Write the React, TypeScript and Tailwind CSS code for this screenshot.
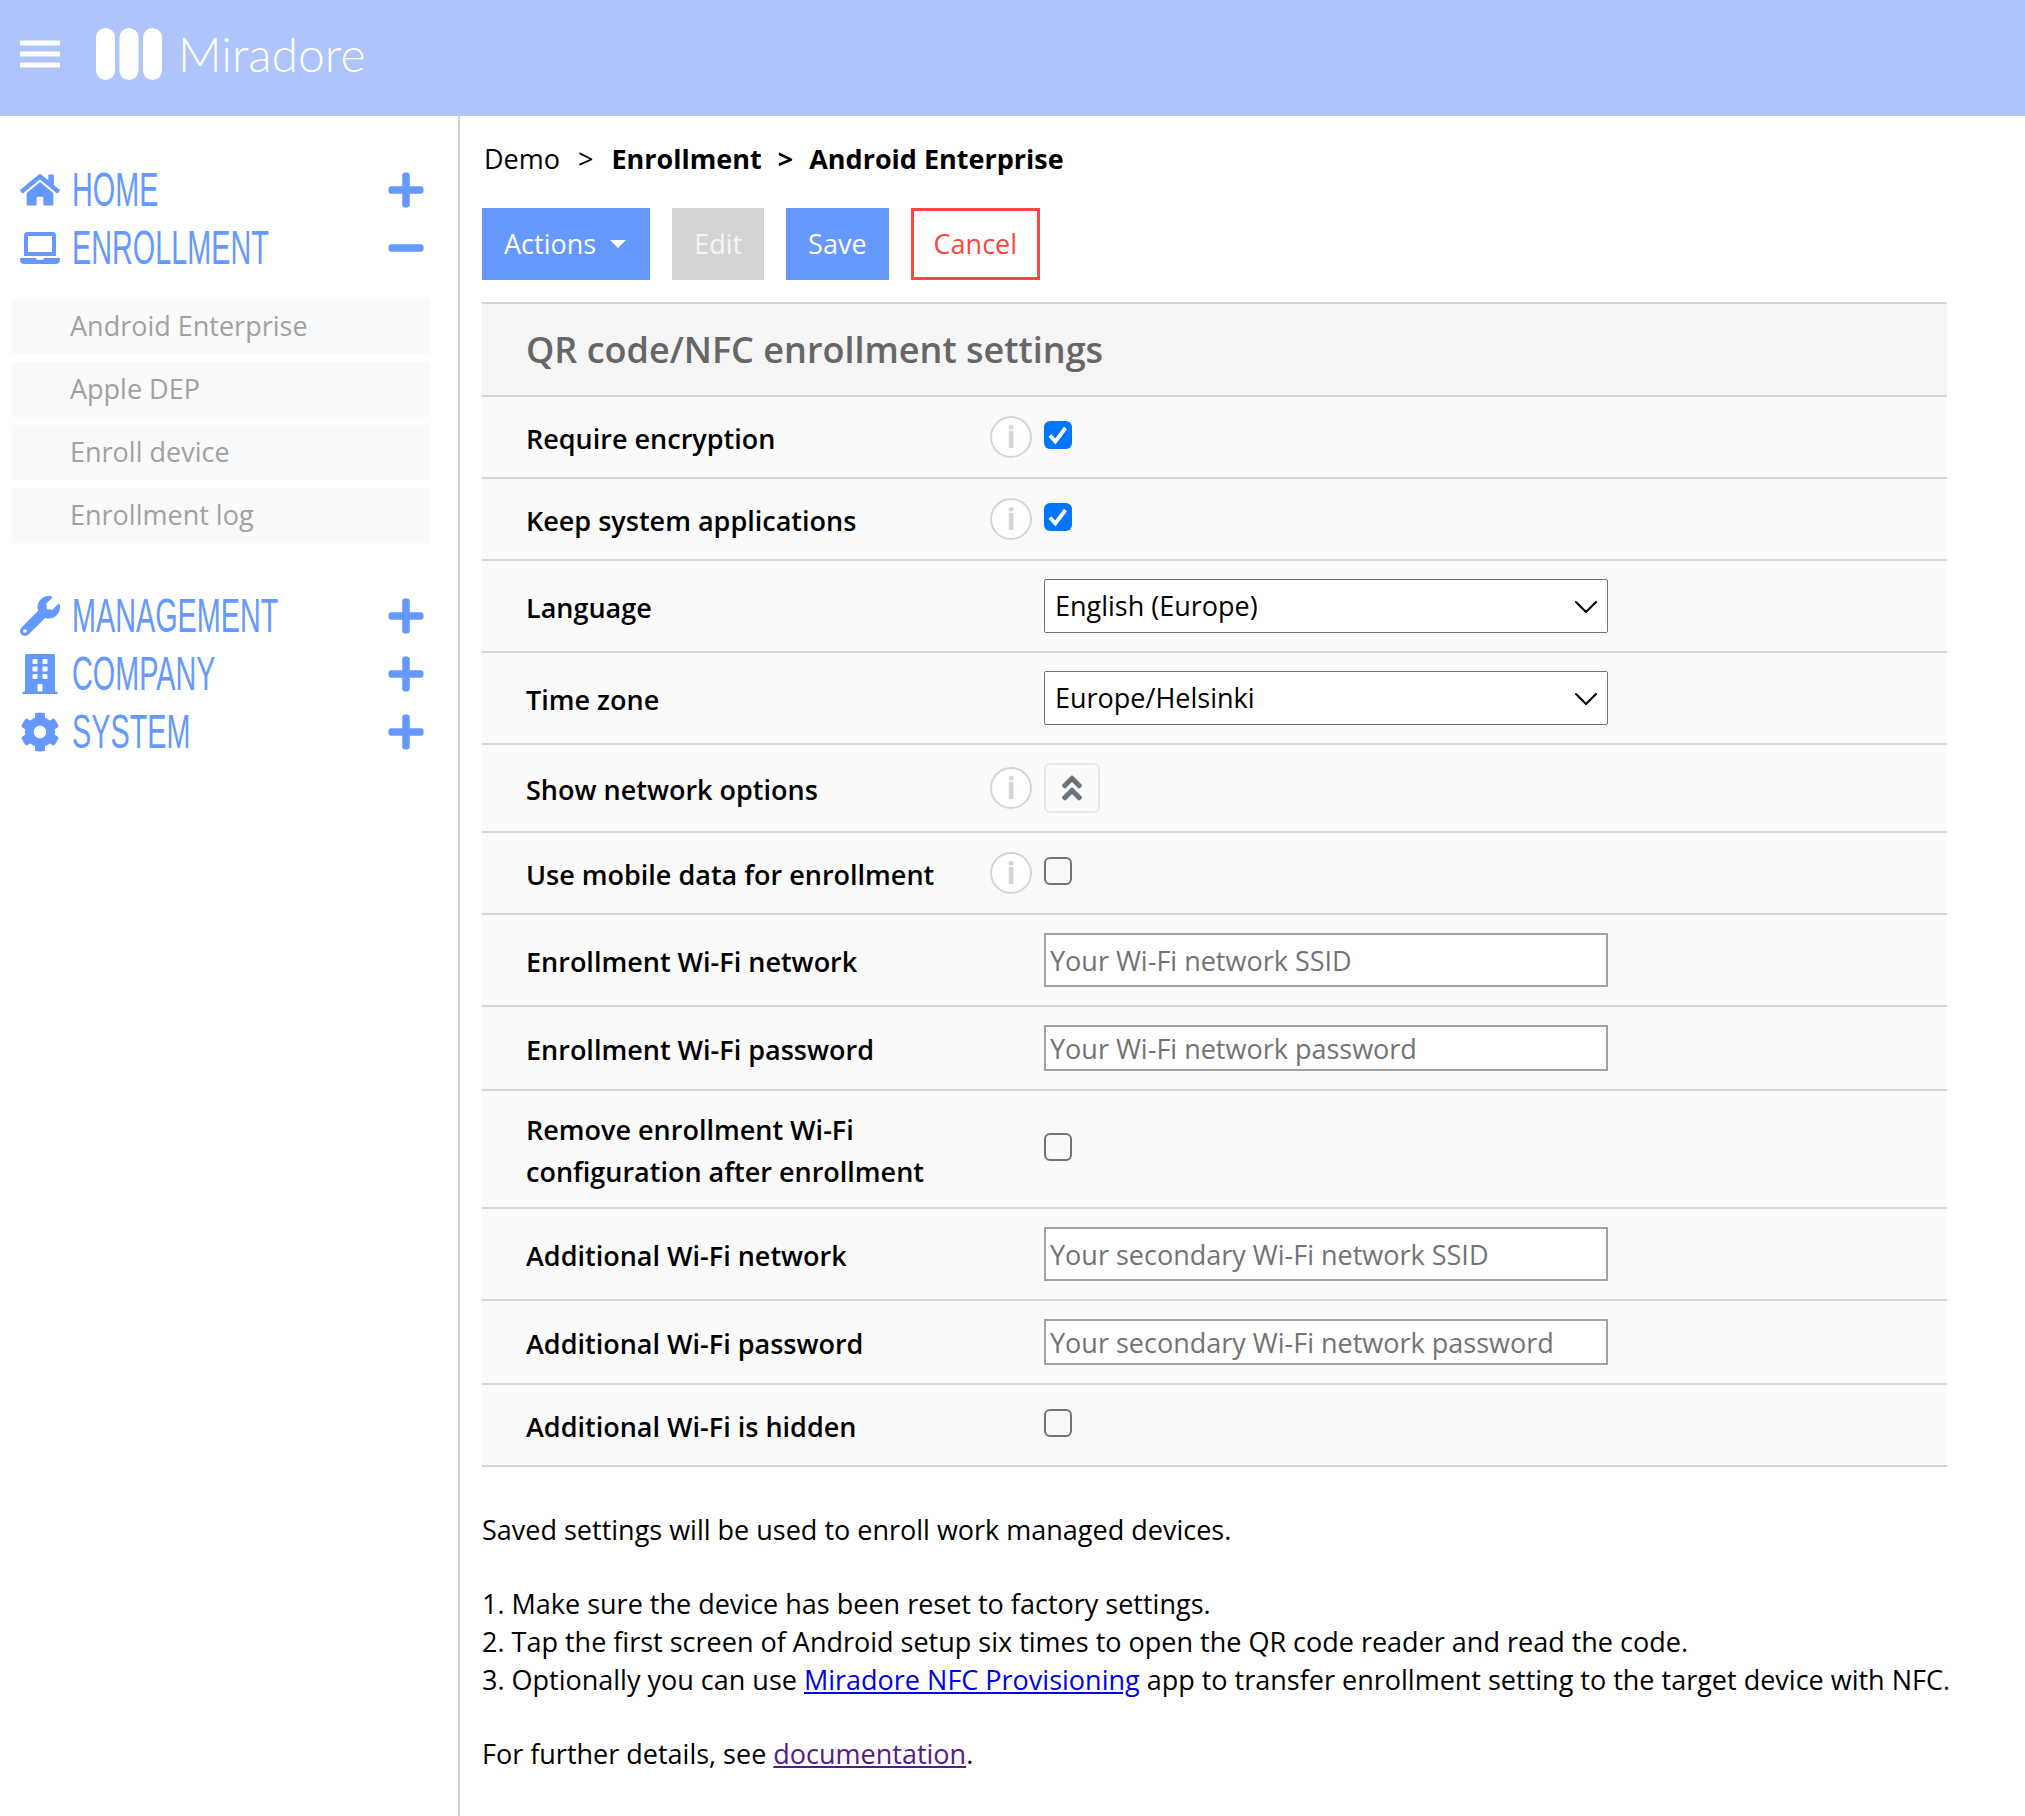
import { ChevronDown } from "lucide-react";
import { FaAngleDoubleUp, FaBuilding, FaCog, FaHome, FaLaptop, FaMinus, FaPlus, FaWrench } from "react-icons/fa";
import type { IconType } from "react-icons";

const subItems = ["Android Enterprise", "Apple DEP", "Enroll device", "Enrollment log"];

function NavRow({ icon: Icon, label, open = false }: { icon: IconType; label: string; open?: boolean }) {
  const Toggle = open ? FaMinus : FaPlus;
  return (
    <div className="flex h-14.5 items-center pr-8 pl-5 text-[#6699ff]">
      <div className="flex w-10 justify-center">
        <Icon className="size-10" />
      </div>
      <span className="ml-3 min-w-0 flex-1 origin-left scale-x-60 font-['Liberation_Sans',sans-serif] text-5xl leading-none whitespace-nowrap">
        {label}
      </span>
      <Toggle className="size-10 shrink-0" />
    </div>
  );
}

function Sidebar() {
  return (
    <aside className="w-115 shrink-0 border-r-2 border-gray-300 pt-11.25">
      <NavRow icon={FaHome} label="HOME" />
      <NavRow icon={FaLaptop} label="ENROLLMENT" open />
      <ul className="mt-5.5 mr-7 ml-3 flex flex-col gap-2">
        {subItems.map((item) => (
          <li key={item} className="flex h-13.75 items-center bg-gray-50 pl-14.5 text-neutral-400">
            {item}
          </li>
        ))}
      </ul>
      <div className="mt-11">
        <NavRow icon={FaWrench} label="MANAGEMENT" />
        <NavRow icon={FaBuilding} label="COMPANY" />
        <NavRow icon={FaCog} label="SYSTEM" />
      </div>
    </aside>
  );
}

function Info() {
  return (
    <span className="absolute -left-13.5 flex size-10.5 items-center justify-center rounded-full border-2 border-gray-300 bg-white text-3xl font-bold text-gray-300">
      i
    </span>
  );
}

function Row({ label, info = false, compact = false, children }: { label: React.ReactNode; info?: boolean; compact?: boolean; children: React.ReactNode }) {
  return (
    <div className={`flex items-center border-b-2 border-gray-300 pl-11 ${compact ? "py-4.5" : "py-5"}`}>
      <div className="w-129.5 translate-y-0.5 leading-10 font-semibold text-black">{label}</div>
      <div className="relative flex items-center">
        {info && <Info />}
        {children}
      </div>
    </div>
  );
}

function Check({ checked = false }: { checked?: boolean }) {
  return (
    <span className="relative flex size-7 -translate-y-0.5">
      <input
        type="checkbox"
        defaultChecked={checked}
        className="peer size-7 appearance-none rounded-md border-2 border-neutral-500 checked:border-0 checked:bg-[#0075ff]"
      />
      <svg viewBox="0 0 26 26" className="pointer-events-none absolute inset-0 hidden size-7 peer-checked:block" fill="none" stroke="white" strokeWidth="3.5">
        <path d="M5.5 13.5 L10.5 19 L20 6.5" />
      </svg>
    </span>
  );
}

function TextInput({ placeholder, short = false }: { placeholder: string; short?: boolean }) {
  return (
    <input
      type="text"
      placeholder={placeholder}
      className={`w-141 border-2 border-neutral-400 bg-white px-1 placeholder:text-neutral-500 ${short ? "h-11.5" : "h-13.5"}`}
    />
  );
}

function Select({ value }: { value: string }) {
  return (
    <div className="relative w-141">
      <select defaultValue={value} className="h-13.5 w-full appearance-none rounded-xs border border-neutral-500 bg-white px-2.5 text-black">
        <option>{value}</option>
      </select>
      <ChevronDown strokeWidth={1.25} className="pointer-events-none absolute top-2 right-0.5 size-10 text-black" />
    </div>
  );
}

function Settings() {
  return (
    <section className="bg-neutral-50">
      <h2 className="flex h-23.75 items-center border-y-2 border-gray-300 bg-neutral-100 pl-11 text-4xl font-semibold text-[#666]">
        QR code/NFC enrollment settings
      </h2>
      <Row label="Require encryption" info>
        <Check checked />
      </Row>
      <Row label="Keep system applications" info>
        <Check checked />
      </Row>
      <Row label="Language" compact>
        <Select value="English (Europe)" />
      </Row>
      <Row label="Time zone" compact>
        <Select value="Europe/Helsinki" />
      </Row>
      <Row label="Show network options" info compact>
        <button className="flex h-12.5 w-14 items-center justify-center rounded-md border-2 border-gray-200 text-gray-500">
          <FaAngleDoubleUp className="size-8" />
        </button>
      </Row>
      <Row label="Use mobile data for enrollment" info>
        <Check />
      </Row>
      <Row label="Enrollment Wi-Fi network" compact>
        <TextInput placeholder="Your Wi-Fi network SSID" />
      </Row>
      <Row label="Enrollment Wi-Fi password" compact>
        <TextInput placeholder="Your Wi-Fi network password" short />
      </Row>
      <Row
        label={
          <div className="-my-0.5 leading-10.5">
            Remove enrollment Wi-Fi
            <br />
            configuration after enrollment
          </div>
        }
        compact
      >
        <Check />
      </Row>
      <Row label="Additional Wi-Fi network" compact>
        <TextInput placeholder="Your secondary Wi-Fi network SSID" />
      </Row>
      <Row label="Additional Wi-Fi password" compact>
        <TextInput placeholder="Your secondary Wi-Fi network password" short />
      </Row>
      <Row label="Additional Wi-Fi is hidden">
        <Check />
      </Row>
    </section>
  );
}

export default function App() {
  return (
    <div className="flex min-h-screen flex-col bg-white font-['Open_Sans',sans-serif] text-[27px]">
      <header className="flex h-29 items-center bg-[#b0c4fc] pb-2 pl-5 text-white">
        <svg viewBox="0 0 40 27" className="h-7 w-10" fill="currentColor">
          <rect y="0" width="40" height="5" />
          <rect y="11" width="40" height="5" />
          <rect y="22" width="40" height="5" />
        </svg>
        <svg viewBox="0 0 66 52" className="ml-9 h-13 w-16.5" fill="currentColor">
          <rect x="0" width="19" height="52" rx="9.5" />
          <rect x="23.5" width="19" height="52" rx="9.5" />
          <rect x="47" width="19" height="52" rx="9.5" />
        </svg>
        <span className="ml-4 font-['Lato',sans-serif] text-5xl font-light">Miradore</span>
      </header>
      <div className="flex flex-1">
        <Sidebar />
        <main className="min-w-0 flex-1 pr-19.5 pl-5.5 text-black">
          <div className="flex h-23 items-center pb-1.5 pl-0.5">
            <span>Demo</span>
            <span className="mx-4.5">&gt;</span>
            <span className="font-bold">Enrollment</span>
            <span className="mx-4 font-bold">&gt;</span>
            <span className="font-bold">Android Enterprise</span>
          </div>
          <div className="flex gap-5.5">
            <button className="flex h-18 items-center gap-3.5 bg-[#6699ff] pr-6 pl-5.5 text-white">
              Actions
              <span className="border-x-8 border-t-8 border-x-transparent border-t-white" />
            </button>
            <button className="h-18 bg-neutral-300 px-5.5 text-neutral-100">Edit</button>
            <button className="h-18 bg-[#6699ff] px-5.5 text-white">Save</button>
            <button className="h-18 border-3 border-[#ff4444] px-5 text-[#ff4444]">Cancel</button>
          </div>
          <div className="mt-5.5">
            <Settings />
          </div>
          <div className="mt-11 leading-9.5">
            <p>Saved settings will be used to enroll work managed devices.</p>
            <p className="mt-9">1. Make sure the device has been reset to factory settings.</p>
            <p>2. Tap the first screen of Android setup six times to open the QR code reader and read the code.</p>
            <p className="whitespace-nowrap">
              3. Optionally you can use <a className="text-[#0000ee] underline">Miradore NFC Provisioning</a> app to transfer enrollment setting to the target device with NFC.
            </p>
            <p className="mt-9">
              For further details, see <a className="text-[#551a8b] underline">documentation</a>.
            </p>
          </div>
        </main>
      </div>
    </div>
  );
}
